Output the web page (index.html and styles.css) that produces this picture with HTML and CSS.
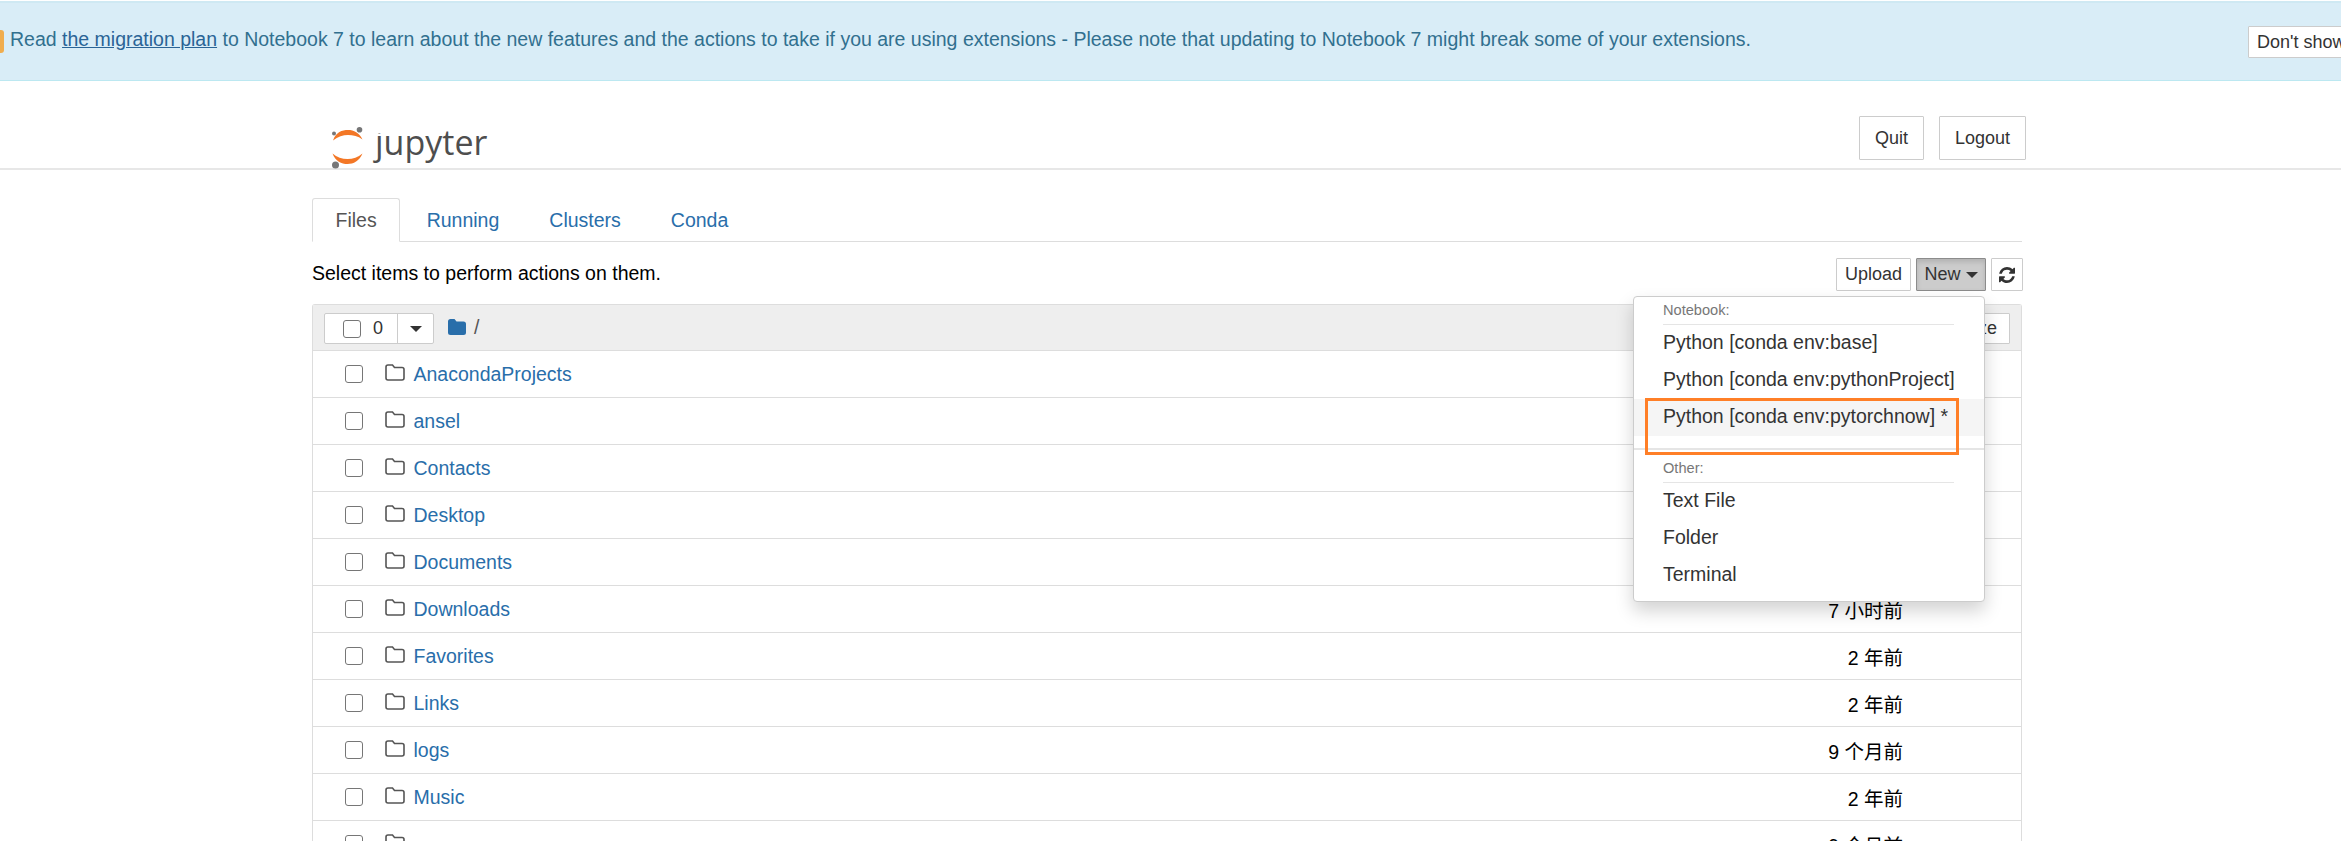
FILE: index.html
```html
<!DOCTYPE html>
<html lang="en">
<head>
<meta charset="utf-8">
<title>Home</title>
<link rel="stylesheet" href="styles.css">
</head>
<body>
<div class="banner">
  <span class="banner-mark"></span>
  <p class="banner-text">Read <a class="banner-link" href="#">the migration plan</a> to Notebook 7 to learn about the new features and the actions to take if you are using extensions - Please note that updating to Notebook 7 might break some of your extensions.</p>
  <button class="btn btn-dismiss">Don't show anymore</button>
</div>
<header class="header">
  <div class="logo">
    <svg class="logo-mark" width="34" height="42" viewBox="0 0 34 42">
      <path d="M2 13.500C5 5 11 3 17 3S28 5.500 31.500 12.500C27 9 22 8 17 8S7 9.500 2 13.500z" fill="#f37726"/>
      <path d="M1.500 26.500C6 30.500 11 32 16.500 32S27 30.500 31.500 26.500C28.500 34 22.500 37 16.500 37S4.500 34.500 1.500 26.500z" fill="#f37726"/>
      <circle cx="28.500" cy="2.800" r="2.800" fill="#767677"/>
      <circle cx="3" cy="6.500" r="2" fill="#767677"/>
      <circle cx="4.500" cy="38" r="3.500" fill="#767677"/>
    </svg>
    <span class="logo-text"><span class="logo-j">j</span>upyter</span>
  </div>
  <div class="header-actions">
    <button class="btn btn-header">Quit</button>
    <button class="btn btn-header">Logout</button>
  </div>
</header>
<main class="main">
  <nav class="tabs">
    <a class="tab tab-active" href="#">Files</a>
    <a class="tab" href="#">Running</a>
    <a class="tab" href="#">Clusters</a>
    <a class="tab" href="#">Conda</a>
  </nav>
  <div class="toolbar">
    <span class="toolbar-hint">Select items to perform actions on them.</span>
    <div class="toolbar-actions">
      <button class="btn btn-tool">Upload</button>
      <button class="btn btn-tool btn-new">New<span class="caret"></span></button>
      <button class="btn btn-refresh" aria-label="Refresh">
        <svg width="16" height="16" viewBox="0 0 1536 1536"><path fill="#333" d="M1511 928q0 5-1 7-64 268-268 434.5t-478 166.5q-146 0-282.5-55t-243.5-157l-129 129q-19 19-45 19t-45-19-19-45v-448q0-26 19-45t45-19h448q26 0 45 19t19 45-19 45l-137 137q71 66 161 102t187 36q134 0 250-65t186-179q11-17 53-117 8-23 30-23h192q13 0 22.5 9.5t9.5 22.5zm25-800v448q0 26-19 45t-45 19h-448q-26 0-45-19t-19-45 19-45l138-138q-148-137-349-137-134 0-250 65t-186 179q-11 17-53 117-8 23-30 23h-199q-13 0-22.5-9.5t-9.5-22.5v-7q65-268 270-434.5t480-166.5q146 0 284 55.5t245 156.5l130-129q19-19 45-19t45 19 19 45z"/></svg>
      </button>
    </div>
  </div>
  <section class="panel">
    <div class="panel-head">
      <div class="select-group">
        <div class="select-main"><input class="check" type="checkbox"><span class="select-count">0</span></div>
        <div class="select-caret"><span class="caret caret-dark"></span></div>
      </div>
      <svg class="crumb-icon" width="18" height="16" viewBox="0 0 18 16"><path fill="#296eaa" d="M2.500 0h4l2 2.500h7a2.500 2.500 0 0 1 2.500 2.500v8.500a2.500 2.500 0 0 1-2.500 2.500h-13A2.500 2.500 0 0 1 0 13.500v-11A2.500 2.500 0 0 1 2.500 0z"/></svg>
      <span class="crumb-sep">/</span>
      <button class="btn btn-sort">File size</button>
    </div>
    <div class="row"><input class="check" type="checkbox"><svg class="folder" viewBox="0 0 20 17"><path d="M3 1h4.500l2 2.500H17a2 2 0 0 1 2 2V14a2 2 0 0 1-2 2H3a2 2 0 0 1-2-2V3a2 2 0 0 1 2-2z"/></svg><a class="name" href="#">AnacondaProjects</a><span class="date">2 年前</span></div>
    <div class="row"><input class="check" type="checkbox"><svg class="folder" viewBox="0 0 20 17"><path d="M3 1h4.500l2 2.500H17a2 2 0 0 1 2 2V14a2 2 0 0 1-2 2H3a2 2 0 0 1-2-2V3a2 2 0 0 1 2-2z"/></svg><a class="name" href="#">ansel</a><span class="date">2 年前</span></div>
    <div class="row"><input class="check" type="checkbox"><svg class="folder" viewBox="0 0 20 17"><path d="M3 1h4.500l2 2.500H17a2 2 0 0 1 2 2V14a2 2 0 0 1-2 2H3a2 2 0 0 1-2-2V3a2 2 0 0 1 2-2z"/></svg><a class="name" href="#">Contacts</a><span class="date">2 年前</span></div>
    <div class="row"><input class="check" type="checkbox"><svg class="folder" viewBox="0 0 20 17"><path d="M3 1h4.500l2 2.500H17a2 2 0 0 1 2 2V14a2 2 0 0 1-2 2H3a2 2 0 0 1-2-2V3a2 2 0 0 1 2-2z"/></svg><a class="name" href="#">Desktop</a><span class="date">2 年前</span></div>
    <div class="row"><input class="check" type="checkbox"><svg class="folder" viewBox="0 0 20 17"><path d="M3 1h4.500l2 2.500H17a2 2 0 0 1 2 2V14a2 2 0 0 1-2 2H3a2 2 0 0 1-2-2V3a2 2 0 0 1 2-2z"/></svg><a class="name" href="#">Documents</a><span class="date">2 年前</span></div>
    <div class="row"><input class="check" type="checkbox"><svg class="folder" viewBox="0 0 20 17"><path d="M3 1h4.500l2 2.500H17a2 2 0 0 1 2 2V14a2 2 0 0 1-2 2H3a2 2 0 0 1-2-2V3a2 2 0 0 1 2-2z"/></svg><a class="name" href="#">Downloads</a><span class="date">7 小时前</span></div>
    <div class="row"><input class="check" type="checkbox"><svg class="folder" viewBox="0 0 20 17"><path d="M3 1h4.500l2 2.500H17a2 2 0 0 1 2 2V14a2 2 0 0 1-2 2H3a2 2 0 0 1-2-2V3a2 2 0 0 1 2-2z"/></svg><a class="name" href="#">Favorites</a><span class="date">2 年前</span></div>
    <div class="row"><input class="check" type="checkbox"><svg class="folder" viewBox="0 0 20 17"><path d="M3 1h4.500l2 2.500H17a2 2 0 0 1 2 2V14a2 2 0 0 1-2 2H3a2 2 0 0 1-2-2V3a2 2 0 0 1 2-2z"/></svg><a class="name" href="#">Links</a><span class="date">2 年前</span></div>
    <div class="row"><input class="check" type="checkbox"><svg class="folder" viewBox="0 0 20 17"><path d="M3 1h4.500l2 2.500H17a2 2 0 0 1 2 2V14a2 2 0 0 1-2 2H3a2 2 0 0 1-2-2V3a2 2 0 0 1 2-2z"/></svg><a class="name" href="#">logs</a><span class="date">9 个月前</span></div>
    <div class="row"><input class="check" type="checkbox"><svg class="folder" viewBox="0 0 20 17"><path d="M3 1h4.500l2 2.500H17a2 2 0 0 1 2 2V14a2 2 0 0 1-2 2H3a2 2 0 0 1-2-2V3a2 2 0 0 1 2-2z"/></svg><a class="name" href="#">Music</a><span class="date">2 年前</span></div>
    <div class="row"><input class="check" type="checkbox"><svg class="folder" viewBox="0 0 20 17"><path d="M3 1h4.500l2 2.500H17a2 2 0 0 1 2 2V14a2 2 0 0 1-2 2H3a2 2 0 0 1-2-2V3a2 2 0 0 1 2-2z"/></svg><span class="date">9 个月前</span></div>
  </section>
  <div class="menu">
    <div class="menu-label">Notebook:</div>
    <a class="menu-item" href="#">Python [conda env:base]</a>
    <a class="menu-item" href="#">Python [conda env:pythonProject]</a>
    <a class="menu-item menu-item-hover" href="#">Python [conda env:pytorchnow] *</a>
    <div class="menu-divider"></div>
    <div class="menu-label">Other:</div>
    <a class="menu-item" href="#">Text File</a>
    <a class="menu-item" href="#">Folder</a>
    <a class="menu-item" href="#">Terminal</a>
  </div>
</main>
<div class="callout"></div>
</body>
</html>
```
FILE: styles.css
```css
* { box-sizing: border-box; }
html, body { margin: 0; height: 841px; overflow: hidden; background: #fff; }
body {
  position: relative;
  font-family: "Liberation Sans", "Noto Sans CJK SC", sans-serif;
  font-size: 19.5px;
  color: #000;
}
a { text-decoration: none; }
.btn {
  font: inherit;
  font-size: 18px;
  color: #333;
  background: #fff;
  border: 1.5px solid #ccc;
  border-radius: 1px;
  cursor: pointer;
  white-space: nowrap;
}

/* Banner */
.banner {
  height: 80px;
  margin-top: 1px;
  background: #d9edf7;
  border-top: 2px solid #cfe9f3;
  border-bottom: 1.5px solid #bce8f1;
  color: #31708f;
  display: flex;
  position: relative;
  overflow: hidden;
}
.banner-mark {
  width: 4px;
  height: 23px;
  margin-top: 27px;
  flex: none;
  background: #f0ad4e;
  border-radius: 0 3px 3px 0;
}
.banner-text { margin: 23px 0 0 6px; white-space: nowrap; line-height: 26px; }
.banner-link { color: #2a6496; text-decoration: underline; }
.btn-dismiss { height: 32px; margin: 23px 0 0 497px; padding: 0 8px; flex: none; }

/* Header */
.header {
  height: 89px;
  border-bottom: 2px solid #e7e7e7;
  padding: 35px 315px 0 312px;
  display: flex;
  justify-content: space-between;
  align-items: flex-start;
}
.logo { display: flex; align-items: flex-start; padding: 9px 0 0 19px; }
.logo-mark { flex: none; margin-top: 2px; }
.logo-text {
  margin: -6px 0 0 10px;
  font-family: "Open Sans", sans-serif;
  font-size: 34px;
  line-height: 46px;
  color: #4e4e4e;
}
.logo-j { display: inline-block; clip-path: inset(0.42em -1em -1em -1em); }
.header-actions { display: flex; gap: 15px; }
.btn-header { height: 44px; padding: 0 15px; }

/* Main column */
.main { margin: 0 0 0 312px; width: 1710px; position: relative; }
.tabs {
  margin-top: 28px;
  height: 44px;
  border-bottom: 1.5px solid #ddd;
  display: flex;
  gap: 3px;
}
.tab {
  height: 44px;
  padding: 0 22.500px;
  line-height: 42px;
  color: #296eaa;
  border: 1.5px solid transparent;
  border-radius: 3px 3px 0 0;
}
.tab-active { color: #555; background: #fff; border-color: #ddd #ddd #fff; }
.toolbar {
  height: 62px;
  display: flex;
  justify-content: space-between;
  padding-top: 16px;
}
.toolbar-hint { line-height: 30px; }
.toolbar-actions { display: flex; gap: 5px; align-items: flex-start; margin-right: -1px; }
.btn-tool { height: 33px; padding: 0 8px; }
.btn-new { width: 70px; padding: 0; background: #ccc; border-color: #8c8c8c; box-shadow: inset 0 3px 5px rgba(0,0,0,.125); }
.btn-refresh { width: 32px; height: 33px; padding: 0; display: flex; align-items: center; justify-content: center; }
.caret {
  display: inline-block;
  margin-left: 5px;
  vertical-align: middle;
  border-top: 6px solid #333;
  border-left: 6px solid transparent;
  border-right: 6px solid transparent;
}

/* Panel */
.panel {
  border: 1.5px solid #ddd;
  border-bottom: 0;
  border-radius: 3px 3px 0 0;
}
.panel-head {
  height: 46px;
  background: #eee;
  border-bottom: 1px solid #ddd;
  display: flex;
  align-items: flex-start;
  padding: 8px 11px 0 11px;
}
.select-group {
  width: 110px;
  height: 31px;
  background: #fff;
  border: 1px solid #ccc;
  border-radius: 2px;
  display: flex;
}
.select-main {
  width: 73px;
  border-right: 1px solid #ccc;
  display: flex;
  align-items: center;
  padding-left: 18px;
  gap: 12px;
}
.select-count { font-size: 18px; color: #333; }
.select-caret { flex: 1; display: flex; align-items: center; justify-content: center; }
.caret-dark { margin: 0; }
.crumb-icon { margin: 6px 0 0 14px; flex: none; }
.crumb-sep { margin: 3px 0 0 8px; color: #555; font-size: 19.500px; }
.btn-sort { margin-left: auto; height: 31px; padding: 0 12px; }
.check {
  appearance: none;
  width: 18px;
  height: 18px;
  margin: 0;
  flex: none;
  background: #fff;
  border: 1.5px solid #767676;
  border-radius: 3px;
}
.row {
  height: 47px;
  border-bottom: 1px solid #ddd;
  display: flex;
  align-items: center;
  padding: 0 118px 0 31.500px;
}
.folder {
  width: 20px;
  height: 17px;
  margin: -3px 0 0 22px;
  flex: none;
  fill: none;
  stroke: #555;
  stroke-width: 1.600;
}
.name { margin-left: 9px; color: #296eaa; }
.date { margin-left: auto; white-space: nowrap; }

/* Dropdown */
.menu {
  position: absolute;
  left: 1321px;
  top: 98px;
  width: 352px;
  height: 306px;
  background: #fff;
  border: 1px solid #ccc;
  border-radius: 4px;
  box-shadow: 0 9px 18px rgba(0,0,0,.175);
  padding-top: 2px;
}
.menu-label {
  margin: 0 30px 0 29px;
  height: 26px;
  font-size: 14.625px;
  line-height: 22px;
  color: #777;
  border-bottom: 1.5px solid #e5e5e5;
}
.menu-item {
  display: block;
  height: 37px;
  line-height: 35px;
  padding-left: 29px;
  color: #333;
  white-space: nowrap;
}
.menu-item-hover { background: #f5f5f5; }
.menu-divider { height: 2px; margin: 12px 0 7px; background: #e5e5e5; }

/* Annotation drawn on the screenshot */
.callout {
  position: absolute;
  left: 1645px;
  top: 398px;
  width: 314px;
  height: 57px;
  border: 3px solid #ff7f27;
}
```
